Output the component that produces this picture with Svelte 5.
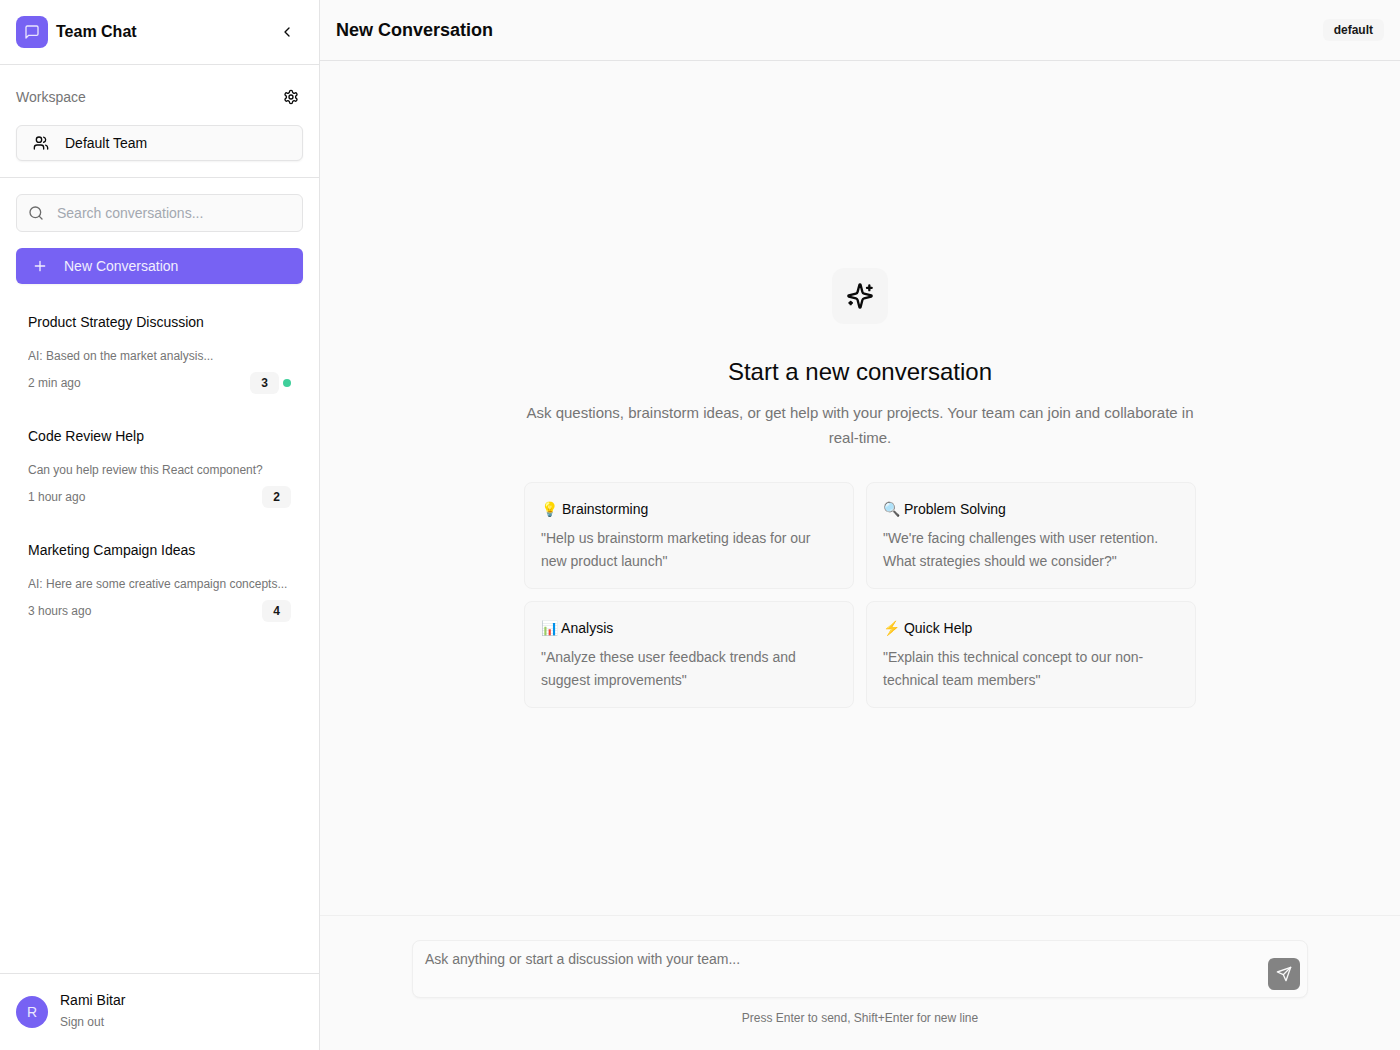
<script lang="ts">
	type Conversation = {
		id: number;
		title: string;
		preview: string;
		time: string;
		count: number;
		active?: boolean;
	};

	const conversations: Conversation[] = [
		{ id: 1, title: 'Product Strategy Discussion', preview: 'AI: Based on the market analysis...', time: '2 min ago', count: 3, active: true },
		{ id: 2, title: 'Code Review Help', preview: 'Can you help review this React component?', time: '1 hour ago', count: 2 },
		{ id: 3, title: 'Marketing Campaign Ideas', preview: 'AI: Here are some creative campaign concepts...', time: '3 hours ago', count: 4 }
	];

	const suggestions = [
		{ title: '💡 Brainstorming', prompt: 'Help us brainstorm marketing ideas for our new product launch' },
		{ title: '🔍 Problem Solving', prompt: "We're facing challenges with user retention. What strategies should we consider?" },
		{ title: '📊 Analysis', prompt: 'Analyze these user feedback trends and suggest improvements' },
		{ title: '⚡ Quick Help', prompt: 'Explain this technical concept to our non-technical team members' }
	];

	let query = $state('');
	let draft = $state('');

	let visible = $derived(
		conversations.filter((c) => c.title.toLowerCase().includes(query.toLowerCase()))
	);
</script>

<div class="app">
	<aside class="sidebar">
		<header class="brand">
			<span class="logo">
				<svg class="icon" viewBox="0 0 24 24"><path d="M21 15a2 2 0 0 1-2 2H7l-4 4V5a2 2 0 0 1 2-2h14a2 2 0 0 1 2 2z" /></svg>
			</span>
			<span class="brand-name">Team Chat</span>
			<button class="icon-button" aria-label="Collapse sidebar">
				<svg class="icon" viewBox="0 0 24 24"><path d="m15 18-6-6 6-6" /></svg>
			</button>
		</header>

		<section class="workspace">
			<div class="workspace-head">
				<span>Workspace</span>
				<button class="icon-button narrow" aria-label="Workspace settings">
					<svg class="icon" viewBox="0 0 24 24">
						<path d="M12.22 2h-.44a2 2 0 0 0-2 2v.18a2 2 0 0 1-1 1.73l-.43.25a2 2 0 0 1-2 0l-.15-.08a2 2 0 0 0-2.73.73l-.22.38a2 2 0 0 0 .73 2.73l.15.1a2 2 0 0 1 1 1.72v.51a2 2 0 0 1-1 1.74l-.15.09a2 2 0 0 0-.73 2.73l.22.38a2 2 0 0 0 2.73.73l.15-.08a2 2 0 0 1 2 0l.43.25a2 2 0 0 1 1 1.73V20a2 2 0 0 0 2 2h.44a2 2 0 0 0 2-2v-.18a2 2 0 0 1 1-1.73l.43-.25a2 2 0 0 1 2 0l.15.08a2 2 0 0 0 2.73-.73l.22-.39a2 2 0 0 0-.73-2.73l-.15-.08a2 2 0 0 1-1-1.74v-.5a2 2 0 0 1 1-1.74l.15-.09a2 2 0 0 0 .73-2.73l-.22-.38a2 2 0 0 0-2.73-.73l-.15.08a2 2 0 0 1-2 0l-.43-.25a2 2 0 0 1-1-1.73V4a2 2 0 0 0-2-2z" />
						<circle cx="12" cy="12" r="3" />
					</svg>
				</button>
			</div>
			<button class="wide-button team">
				<svg class="icon" viewBox="0 0 24 24">
					<path d="M16 21v-2a4 4 0 0 0-4-4H6a4 4 0 0 0-4 4v2" />
					<circle cx="9" cy="7" r="4" />
					<path d="M22 21v-2a4 4 0 0 0-3-3.87" />
					<path d="M16 3.13a4 4 0 0 1 0 7.75" />
				</svg>
				Default Team
			</button>
		</section>

		<section class="browse">
			<label class="search">
				<svg class="icon" viewBox="0 0 24 24"><circle cx="11" cy="11" r="8" /><path d="m21 21-4.3-4.3" /></svg>
				<input type="text" placeholder="Search conversations..." aria-label="Search conversations" bind:value={query} />
			</label>
			<button class="wide-button primary">
				<svg class="icon" viewBox="0 0 24 24"><path d="M5 12h14M12 5v14" /></svg>
				New Conversation
			</button>
			<nav class="list">
				{#each visible as item (item.id)}
					<button class="conversation">
						<span class="conversation-title">{item.title}</span>
						<span class="conversation-preview">{item.preview}</span>
						<span class="conversation-meta">
							<span class="time">{item.time}</span>
							<span class="badge">{item.count}</span>
							{#if item.active}<span class="dot"></span>{/if}
						</span>
					</button>
				{/each}
			</nav>
		</section>

		<footer class="account">
			<span class="avatar">R</span>
			<div class="account-info">
				<span class="account-name">Rami Bitar</span>
				<button class="sign-out">Sign out</button>
			</div>
		</footer>
	</aside>

	<main class="main">
		<header class="topbar">
			<h1>New Conversation</h1>
			<span class="badge">default</span>
		</header>

		<section class="welcome">
			<div class="welcome-inner">
				<span class="sparkle">
					<svg class="icon large" viewBox="0 0 24 24">
						<path d="M9.937 15.5A2 2 0 0 0 8.5 14.063l-6.135-1.582a.5.5 0 0 1 0-.962L8.5 9.936A2 2 0 0 0 9.937 8.5l1.582-6.135a.5.5 0 0 1 .963 0L14.063 8.5A2 2 0 0 0 15.5 9.937l6.135 1.581a.5.5 0 0 1 0 .964L15.5 14.063a2 2 0 0 0-1.437 1.437l-1.582 6.135a.5.5 0 0 1-.963 0z" />
						<path d="M20 3v4M22 5h-4M4 17v2M5 18H3" />
					</svg>
				</span>
				<h2>Start a new conversation</h2>
				<p class="lead">
					Ask questions, brainstorm ideas, or get help with your projects. Your team can join and collaborate in real-time.
				</p>
				<div class="cards">
					{#each suggestions as s}
						<button class="card" onclick={() => (draft = s.prompt)}>
							<span class="card-title">{s.title}</span>
							<span class="card-text">"{s.prompt}"</span>
						</button>
					{/each}
				</div>
			</div>
		</section>

		<footer class="composer">
			<form class="composer-box" onsubmit={(e) => e.preventDefault()}>
				<textarea
					placeholder="Ask anything or start a discussion with your team..."
					aria-label="Message"
					bind:value={draft}
				></textarea>
				<button class="send" aria-label="Send message">
					<svg class="icon" viewBox="0 0 24 24"><path d="m22 2-7 20-4-9-9-4Z" /><path d="M22 2 11 13" /></svg>
				</button>
			</form>
			<p class="hint">Press Enter to send, Shift+Enter for new line</p>
		</footer>
	</main>
</div>

<style>
	:global(body) {
		margin: 0;
	}

	.app {
		--accent: #7762f3;
		--line: #e4e4e5;
		--line-soft: #efefef;
		--surface: #fafafa;
		--raised: #f5f5f5;
		--muted: #757575;

		display: flex;
		height: 100vh;
		background: var(--surface);
		color: #0a0a0a;
		font-family: 'Liberation Sans', Arial, sans-serif;
		font-size: 14px;
		line-height: 20px;
	}

	.app *,
	.app {
		box-sizing: border-box;
	}

	button,
	input,
	textarea {
		border: 0;
		margin: 0;
		padding: 0;
		background: none;
		color: inherit;
		font: inherit;
	}

	button {
		cursor: pointer;
		text-align: left;
	}

	h1,
	h2,
	p {
		margin: 0;
	}

	.icon {
		width: 16px;
		height: 16px;
		flex-shrink: 0;
		fill: none;
		stroke: currentColor;
		stroke-width: 2;
		stroke-linecap: round;
		stroke-linejoin: round;
	}

	.icon.large {
		width: 28px;
		height: 28px;
	}

	.sidebar {
		width: 320px;
		flex-shrink: 0;
		display: flex;
		flex-direction: column;
		background: #fff;
		border-right: 1px solid var(--line);
	}

	.brand {
		display: flex;
		align-items: center;
		gap: 8px;
		padding: 16px;
		border-bottom: 1px solid var(--line);
	}

	.logo {
		width: 32px;
		height: 32px;
		display: grid;
		place-items: center;
		border-radius: 8px;
		background: var(--accent);
		color: #e9e5fd;
	}

	.brand-name {
		flex: 1;
		font-size: 16px;
		font-weight: 700;
	}

	.icon-button {
		width: 32px;
		height: 32px;
		display: grid;
		place-items: center;
		border-radius: 6px;
	}

	.icon-button.narrow {
		width: 24px;
	}

	.workspace {
		display: grid;
		gap: 12px;
		padding: 16px;
		border-bottom: 1px solid var(--line);
	}

	.workspace-head {
		display: flex;
		align-items: center;
		justify-content: space-between;
		color: var(--muted);
	}

	.workspace-head button {
		color: #0a0a0a;
	}

	.wide-button {
		width: 100%;
		height: 36px;
		display: flex;
		align-items: center;
		gap: 16px;
		padding: 0 16px;
		border-radius: 6px;
		box-shadow: 0 1px 2px rgb(0 0 0 / 0.05);
	}

	.team {
		border: 1px solid var(--line);
		background: var(--surface);
	}

	.primary {
		background: var(--accent);
		color: #f1eefe;
	}

	.browse {
		flex: 1;
		min-height: 0;
		display: flex;
		flex-direction: column;
		gap: 16px;
		padding: 16px;
	}

	.search {
		height: 38px;
		flex-shrink: 0;
		display: flex;
		align-items: center;
		gap: 13px;
		padding: 0 11px;
		border: 1px solid var(--line);
		border-radius: 6px;
		background: var(--surface);
		color: #6b6b6b;
	}

	.search input {
		flex: 1;
		min-width: 0;
		outline: 0;
		color: #0a0a0a;
	}

	.search input::placeholder {
		color: #a3a8b0;
	}

	.browse .wide-button {
		flex-shrink: 0;
	}

	.list {
		display: grid;
		align-content: start;
		gap: 8px;
		overflow-y: auto;
	}

	.conversation {
		min-width: 0;
		display: flex;
		flex-direction: column;
		gap: 8px;
		padding: 12px;
		border-radius: 8px;
		font-size: 12px;
		line-height: 16px;
		color: var(--muted);
	}

	.conversation-title {
		padding-bottom: 8px;
		color: #0a0a0a;
		font-size: 14px;
		line-height: 20px;
	}

	.conversation-preview {
		overflow: hidden;
		text-overflow: ellipsis;
		white-space: nowrap;
	}

	.conversation-meta {
		display: flex;
		align-items: center;
		gap: 4px;
	}

	.time {
		flex: 1;
	}

	.badge {
		padding: 3px 11px;
		border-radius: 6px;
		background: var(--raised);
		color: #171717;
		font-size: 12px;
		font-weight: 700;
		line-height: 16px;
	}

	.dot {
		width: 8px;
		height: 8px;
		border-radius: 50%;
		background: #3fcf9b;
	}

	.account {
		display: flex;
		align-items: center;
		gap: 12px;
		padding: 16px;
		border-top: 1px solid var(--line);
	}

	.avatar {
		width: 32px;
		height: 32px;
		display: grid;
		place-items: center;
		border-radius: 50%;
		background: var(--accent);
		color: #ece9fe;
	}

	.account-info {
		display: grid;
		justify-items: start;
	}

	.sign-out {
		color: var(--muted);
		font-size: 12px;
		line-height: 24px;
	}

	.main {
		flex: 1;
		min-width: 0;
		display: flex;
		flex-direction: column;
	}

	.topbar {
		display: flex;
		align-items: center;
		justify-content: space-between;
		padding: 16px;
		border-bottom: 1px solid var(--line);
	}

	.topbar h1 {
		font-size: 18px;
		font-weight: 700;
		line-height: 28px;
	}

	.welcome {
		flex: 1;
		min-height: 0;
		display: grid;
		place-items: center;
		overflow-y: auto;
	}

	.welcome-inner {
		max-width: 672px;
		display: flex;
		flex-direction: column;
		align-items: center;
		text-align: center;
	}

	.sparkle {
		width: 56px;
		height: 56px;
		display: grid;
		place-items: center;
		margin-bottom: 32px;
		border-radius: 12px;
		background: var(--raised);
	}

	.welcome h2 {
		margin-bottom: 12px;
		font-size: 24px;
		font-weight: 400;
		line-height: 32px;
	}

	.lead {
		margin-bottom: 32px;
		color: var(--muted);
		font-size: 15px;
		line-height: 25px;
	}

	.cards {
		display: grid;
		grid-template-columns: repeat(2, minmax(0, 1fr));
		gap: 12px;
	}

	.card {
		display: flex;
		flex-direction: column;
		gap: 8px;
		padding: 16px 16px 15px;
		border: 1px solid var(--line-soft);
		border-radius: 8px;
		background: #f8f8f8;
	}

	.card-text {
		color: var(--muted);
		line-height: 23px;
	}

	.composer {
		padding: 24px;
		border-top: 1px solid var(--line-soft);
	}

	.composer-box {
		max-width: 896px;
		display: flex;
		align-items: flex-end;
		margin: 0 auto 12px;
		padding-right: 7px;
		border: 1px solid var(--line-soft);
		border-radius: 8px;
		background: #fbfbfb;
		box-shadow: 0 1px 2px rgb(0 0 0 / 0.03);
	}

	.composer textarea {
		flex: 1;
		height: 56px;
		padding: 8px 12px;
		outline: 0;
		resize: none;
	}

	.composer textarea::placeholder {
		color: var(--muted);
	}

	.send {
		width: 32px;
		height: 32px;
		display: grid;
		place-items: center;
		margin-bottom: 7px;
		border-radius: 6px;
		background: #838383;
		color: #fafafa;
	}

	.hint {
		color: var(--muted);
		font-size: 12px;
		line-height: 16px;
		text-align: center;
	}
</style>
